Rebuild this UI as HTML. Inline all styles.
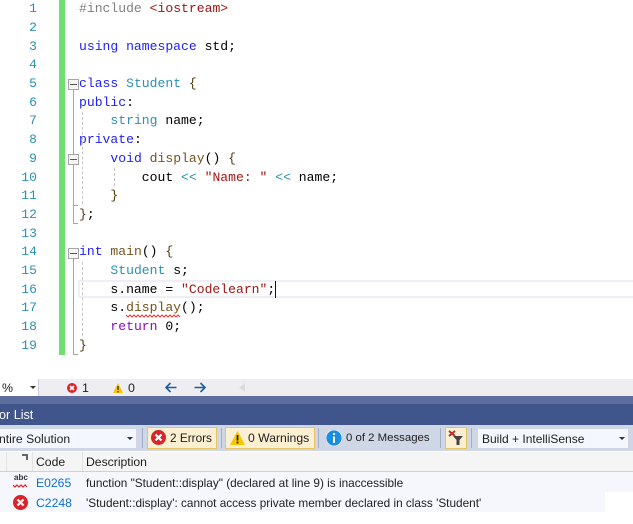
<!DOCTYPE html>
<html><head><meta charset="utf-8">
<style>
html,body{margin:0;padding:0;background:#fff}
#p{position:relative;width:633px;height:524px;overflow:hidden;background:#fff;font-family:"Liberation Sans",sans-serif}
#p div,#p span.a,#p svg{position:absolute}
.ln{left:0;width:37px;text-align:right;font:13px/18px "Liberation Mono",monospace;color:#2b91af;letter-spacing:.05px}
.c{left:79px;font:13.08px/18px "Liberation Mono",monospace;color:#000;white-space:pre}
.k{color:#2020ff}.t{color:#2b91af}.f{color:#74531f}.s{color:#a31515}.g{color:#808080}.m{color:#8f08c4}.p{color:#4f3a10}
.u{font-size:11.8px;line-height:16px;color:#1e1e1e;white-space:pre}
.btn{background:#fdefd2;border:1px solid #e5c365;box-sizing:border-box}
.sep{width:1px;background:#a3aec9}
.fold{width:9px;height:9px;border:1px solid #a5a5a5;background:#f6f6f6;left:68px}
.fold:after{content:"";position:absolute;left:1px;top:4px;width:7px;height:1px;background:#555}
</style></head><body><div id="p">

<div style="left:59px;top:0;width:6px;height:355px;background:#6fe06f"></div>

<div class="ln" style="top:0px">1</div>
<div class="ln" style="top:19px">2</div>
<div class="ln" style="top:38px">3</div>
<div class="ln" style="top:56px">4</div>
<div class="ln" style="top:75px">5</div>
<div class="ln" style="top:94px">6</div>
<div class="ln" style="top:112px">7</div>
<div class="ln" style="top:131px">8</div>
<div class="ln" style="top:150px">9</div>
<div class="ln" style="top:169px">10</div>
<div class="ln" style="top:187px">11</div>
<div class="ln" style="top:206px">12</div>
<div class="ln" style="top:225px">13</div>
<div class="ln" style="top:243px">14</div>
<div class="ln" style="top:262px">15</div>
<div class="ln" style="top:281px">16</div>
<div class="ln" style="top:299px">17</div>
<div class="ln" style="top:318px">18</div>
<div class="ln" style="top:337px">19</div>

<div style="left:78px;top:280px;width:555px;height:14px;border:2px solid #eeeef4;border-right:0"></div>
<div style="left:275px;top:281px;width:1px;height:17px;background:#111"></div>

<div class="c" style="top:0px"><span class="g">#include</span> <span class="s">&lt;iostream&gt;</span></div>
<div class="c" style="top:38px"><span class="k">using namespace</span> std;</div>
<div class="c" style="top:75px"><span class="k">class</span> <span class="t">Student</span> <span class="p">{</span></div>
<div class="c" style="top:94px"><span class="k">public</span>:</div>
<div class="c" style="top:112px">    <span class="t">string</span> name;</div>
<div class="c" style="top:131px"><span class="k">private</span>:</div>
<div class="c" style="top:150px">    <span class="k">void</span> <span class="f">display</span>() <span class="p">{</span></div>
<div class="c" style="top:169px">        cout <span class="t">&lt;&lt;</span> <span class="s">"Name: "</span> <span class="t">&lt;&lt;</span> name;</div>
<div class="c" style="top:187px">    <span class="p">}</span></div>
<div class="c" style="top:206px"><span class="p">}</span>;</div>
<div class="c" style="top:243px"><span class="k">int</span> <span class="f">main</span>() <span class="p">{</span></div>
<div class="c" style="top:262px">    <span class="t">Student</span> s;</div>
<div class="c" style="top:281px">    s.name = <span class="s">"Codelearn"</span>;</div>
<div class="c" style="top:299px">    s.<span class="f">display</span>();</div>
<div class="c" style="top:318px">    <span class="m">return</span> 0;</div>
<div class="c" style="top:337px"><span class="p">}</span></div>

<div class="fold" style="top:79px"></div>
<div class="fold" style="top:154px"></div>
<div class="fold" style="top:248px"></div>
<div style="left:73px;top:90px;width:1px;height:64px;background:#a5a5a5"></div>
<div style="left:73px;top:165px;width:1px;height:59px;background:#a5a5a5"></div>
<div style="left:73px;top:205px;width:5px;height:1px;background:#a5a5a5"></div>
<div style="left:73px;top:223px;width:5px;height:1px;background:#a5a5a5"></div>
<div style="left:73px;top:259px;width:1px;height:95px;background:#a5a5a5"></div>
<div style="left:73px;top:354px;width:5px;height:1px;background:#a5a5a5"></div>
<div style="left:82px;top:112px;width:0;height:92px;border-left:1px dashed #c8c8c8"></div>
<div style="left:82px;top:262px;width:0;height:74px;border-left:1px dashed #c8c8c8"></div>
<div style="left:114px;top:168px;width:0;height:18px;border-left:1px dashed #c8c8c8"></div>

<svg style="left:126px;top:314px" width="56" height="4" viewBox="0 0 56 4"><path d="M0 1 L2 3 L4 1 L6 3 L8 1 L10 3 L12 1 L14 3 L16 1 L18 3 L20 1 L22 3 L24 1 L26 3 L28 1 L30 3 L32 1 L34 3 L36 1 L38 3 L40 1 L42 3 L44 1 L46 3 L48 1 L50 3 L52 1 L54 3" fill="none" stroke="#e33" stroke-width="1"/></svg>

<!-- status bar -->
<div style="left:0;top:379px;width:633px;height:17px;background:#eeeef2"></div>
<div style="left:0;top:379px;width:39px;height:17px;background:#fff;border-right:1px solid #ccd;box-sizing:border-box"></div>
<div class="u" style="left:2px;top:380px;font-size:12.4px">%</div>
<svg style="left:30px;top:386px" width="6" height="3"><path d="M0 0H6L3 3Z" fill="#333"/></svg>
<svg style="left:67px;top:383px" width="10" height="10" viewBox="0 0 10 10"><circle cx="5" cy="5" r="5" fill="#d8232a"/><path d="M3 3L7 7M7 3L3 7" stroke="#fff" stroke-width="1.6"/></svg>
<div class="u" style="left:82px;top:380px;font-size:12.4px">1</div>
<svg style="left:113px;top:383px" width="10" height="10" viewBox="0 0 10 10"><path d="M5 0L10 10H0Z" fill="#f7c600"/><path d="M5 3V7M5 8V9.5" stroke="#222" stroke-width="1.2"/></svg>
<div class="u" style="left:128px;top:380px;font-size:12.4px">0</div>
<svg style="left:165px;top:382px" width="12" height="11" viewBox="0 0 12 11"><path d="M11.5 5.5H1M5.5 1L1 5.5L5.5 10" fill="none" stroke="#1c5f9c" stroke-width="1.6"/></svg>
<svg style="left:194px;top:382px" width="12" height="11" viewBox="0 0 12 11"><path d="M.5 5.5H11M6.5 1L11 5.5L6.5 10" fill="none" stroke="#1c5f9c" stroke-width="1.6"/></svg>
<svg style="left:238px;top:383px" width="7" height="9"><path d="M7 0V9L1 4.5Z" fill="#dcdce0"/></svg>

<!-- error list title -->
<div style="left:0;top:396px;width:633px;height:8px;background:#5d6e9e"></div>
<div style="left:0;top:404px;width:633px;height:21px;background:#40558c"></div>
<div class="u" style="left:-1px;top:407px;color:#fff;font-size:12.6px">or List</div>

<!-- toolbar -->
<div style="left:0;top:425px;width:633px;height:26px;background:#cfd6e5"></div>
<div style="left:0;top:429px;width:136px;height:19px;background:#f4f7fd"></div>
<div class="u" style="left:-1px;top:431px;font-size:12.2px">ntire Solution</div>
<svg style="left:127px;top:437px" width="6" height="3"><path d="M0 0H6L3 3Z" fill="#333"/></svg>
<div class="sep" style="left:142px;top:428px;height:20px"></div>

<div class="btn" style="left:147px;top:427px;width:70px;height:22px"></div>
<svg style="left:151px;top:430px" width="15" height="15" viewBox="0 0 15 15"><circle cx="7.5" cy="7.5" r="7.5" fill="#d8232a"/><path d="M4.5 4.5L10.5 10.5M10.5 4.5L4.5 10.5" stroke="#fff" stroke-width="2.2"/></svg>
<div class="u" style="left:170px;top:430px">2 Errors</div>
<div class="sep" style="left:221px;top:428px;height:20px"></div>

<div class="btn" style="left:225px;top:427px;width:90px;height:22px"></div>
<svg style="left:230px;top:431px" width="15" height="14" viewBox="0 0 15 14"><path d="M7.5 0L15 14H0Z" fill="#f7c600"/><path d="M7.5 4V9.5M7.5 10.5V12.5" stroke="#222" stroke-width="1.7"/></svg>
<div class="u" style="left:248px;top:430px;font-size:12.2px">0 Warnings</div>
<div class="sep" style="left:318px;top:428px;height:20px"></div>

<svg style="left:326px;top:430px" width="16" height="16" viewBox="0 0 16 16"><circle cx="8" cy="8" r="8" fill="#1a8ee0"/><circle cx="8" cy="8" r="8" fill="none" stroke="#e8f2fb" stroke-width=".8"/><path d="M8 6.5V13M8 3V5" stroke="#fff" stroke-width="2"/></svg>
<div class="u" style="left:346px;top:430px;font-size:11.4px">0 of 2 Messages</div>
<div class="sep" style="left:440px;top:428px;height:20px"></div>

<div class="btn" style="left:445px;top:427px;width:22px;height:22px"></div>
<svg style="left:448px;top:430px" width="16" height="16" viewBox="0 0 16 16"><path d="M1 1L7 6M7 1L1 6" stroke="#b3332b" stroke-width="2"/><path d="M5 6H15L11.5 10V15H8.5V10Z" fill="#444"/></svg>
<div class="sep" style="left:471px;top:428px;height:20px"></div>

<div style="left:478px;top:429px;width:150px;height:19px;background:#f4f7fd"></div>
<div class="u" style="left:482px;top:431px;font-size:12px">Build + IntelliSense</div>
<svg style="left:619px;top:437px" width="6" height="3"><path d="M0 0H6L3 3Z" fill="#333"/></svg>

<!-- header -->
<div style="left:0;top:451px;width:633px;height:1px;background:#fff"></div>
<div style="left:0;top:452px;width:633px;height:19px;background:#f5f5f5"></div>
<div style="left:0;top:471px;width:633px;height:1px;background:#cdd0de"></div>
<div style="left:6px;top:452px;width:1px;height:19px;background:#e2e2e2"></div>
<div style="left:32px;top:452px;width:1px;height:19px;background:#e2e2e2"></div>
<div style="left:82px;top:452px;width:1px;height:19px;background:#e2e2e2"></div>
<svg style="left:22px;top:454px" width="6" height="6"><path d="M0 0H6V6H4V2H0Z" fill="#666"/></svg>
<div class="u" style="left:36px;top:454px;font-size:12.2px">Code</div>
<div class="u" style="left:86px;top:454px;font-size:12.2px">Description</div>

<!-- rows -->
<div style="left:0;top:472px;width:605px;height:40px;background:#f5f7fd"></div>
<div style="left:605px;top:472px;width:28px;height:20px;background:#f5f7fd"></div>

<div class="u" style="left:14px;top:473px;font-size:8px;line-height:10px;font-weight:bold;color:#333">abc</div>
<svg style="left:13px;top:484px" width="15" height="4" viewBox="0 0 15 4"><path d="M0 1L2 3L4 1L6 3L8 1L10 3L12 1L14 3" fill="none" stroke="#d8232a" stroke-width="1.2"/></svg>
<svg style="left:13px;top:495px" width="15" height="15" viewBox="0 0 15 15"><circle cx="7.5" cy="7.5" r="7.5" fill="#d8232a"/><path d="M4.5 4.5L10.5 10.5M10.5 4.5L4.5 10.5" stroke="#fff" stroke-width="2.2"/></svg>

<div class="u" style="left:36px;top:475px;color:#0e6fd0;font-size:12.2px">E0265</div>
<div class="u" style="left:36px;top:495px;color:#0e6fd0;font-size:12.2px">C2248</div>
<div class="u" style="left:86px;top:475px">function "Student::display" (declared at line 9) is inaccessible</div>
<div class="u" style="left:86px;top:495px">'Student::display': cannot access private member declared in class 'Student'</div>

</div></body></html>
